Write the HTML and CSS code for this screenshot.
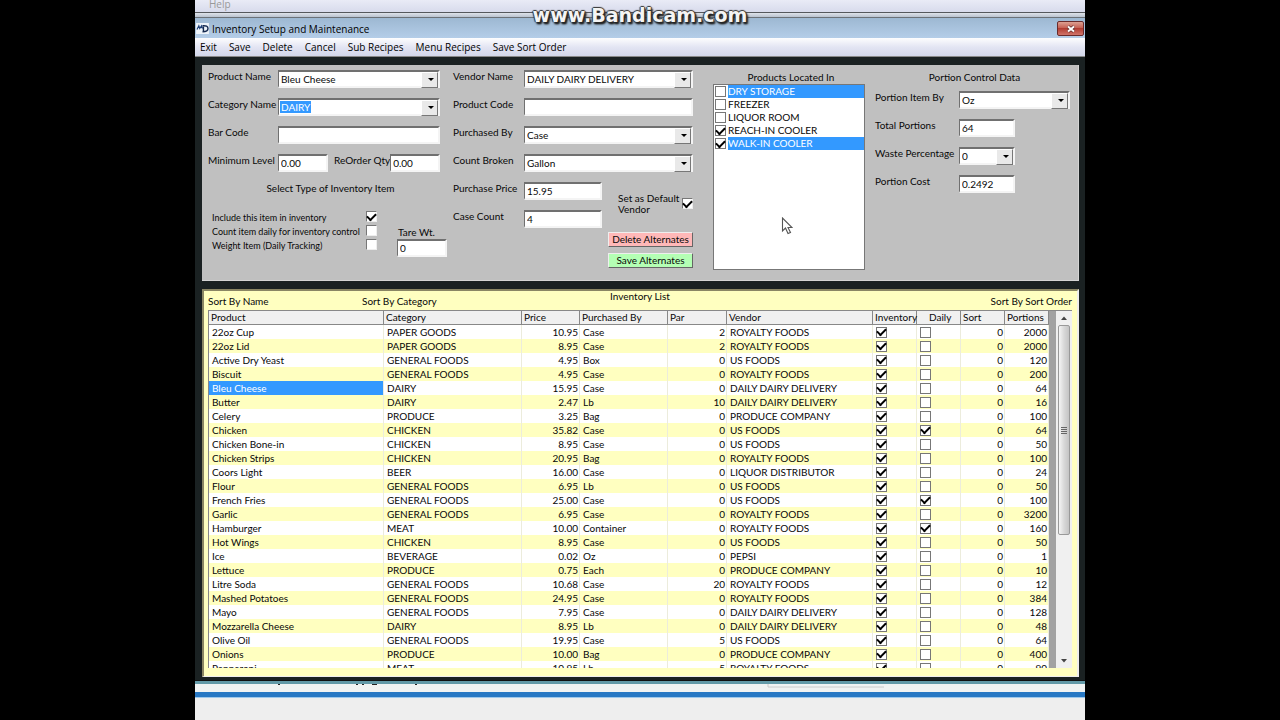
FILE: index.html
```html
<!DOCTYPE html>
<html lang="en">
<head>
<meta charset="utf-8">
<title>Inventory Setup and Maintenance</title>
<link rel="stylesheet" href="styles.css">
</head>
<body>
<div class="watermark">www.Bandicam.com</div>
<div class="desktop">
  <div class="parent-menu"><span>Help</span></div>
  <div class="parent-edge"></div>
  <main class="window">
    <header class="titlebar">
      <svg class="logo" viewBox="0 0 14 12" aria-hidden="true"><rect width="14" height="12" fill="#eef4fa"/><path d="M1 7 3 3 4 6 6 3 7 6" fill="none" stroke="#1d3f78" stroke-width="1.3"/><path d="M7 3q6-.5 6 3t-6 3.500M8 4v5" fill="none" stroke="#14284f" stroke-width="1.5"/></svg>
      <h1>Inventory Setup and Maintenance</h1>
      <button class="close" aria-label="Close"><svg viewBox="0 0 10 8"><path d="M2 1.500 8 6.500M8 1.500 2 6.500" stroke="#5c2a28" stroke-width="3.400"/><path d="M2 1.500 8 6.500M8 1.500 2 6.500" stroke="#fff" stroke-width="2"/></svg></button>
    </header>
    <nav class="menu">
      <button>Exit</button><button>Save</button><button>Delete</button><button>Cancel</button><button>Sub Recipes</button><button>Menu Recipes</button><button>Save Sort Order</button>
    </nav>
    <div class="client">
      <form class="panel setup">
        <section class="product">
          <div class="fields">
            <label for="name">Product Name</label>
            <span class="combo wide"><select id="name"><option>Bleu Cheese</option></select></span>
            <label for="category">Category Name</label>
            <span class="combo wide"><select id="category" class="selected"><option>DAIRY</option></select></span>
            <label for="barcode">Bar Code</label>
            <input class="box wide" id="barcode" type="text">
            <label for="min">Minimum Level</label>
            <input class="box" id="min" type="text" value="0.00">
            <label class="mid" for="reorder">ReOrder Qty</label>
            <input class="box" id="reorder" type="text" value="0.00">
          </div>
          <h2 class="type-title">Select Type of Inventory Item</h2>
          <div class="types">
            <div class="checks">
              <label for="inc">Include this item in inventory</label><input id="inc" type="checkbox" checked>
              <label for="count">Count item daily for inventory control</label><input id="count" type="checkbox">
              <label for="weight">Weight Item (Daily Tracking)</label><input id="weight" type="checkbox">
            </div>
            <div class="tare"><label for="tare">Tare Wt.</label><input class="box" id="tare" type="text" value="0"></div>
          </div>
        </section>
        <section class="vendor fields">
          <label for="vendor">Vendor Name</label>
          <span class="combo wide"><select id="vendor"><option>DAILY DAIRY DELIVERY</option></select></span>
          <label for="code">Product Code</label>
          <input class="box wide" id="code" type="text">
          <label for="by">Purchased By</label>
          <span class="combo wide"><select id="by"><option>Case</option></select></span>
          <label for="broken">Count Broken</label>
          <span class="combo wide"><select id="broken"><option>Gallon</option></select></span>
          <label for="price">Purchase Price</label>
          <input class="box" id="price" type="text" value="15.95">
          <label for="cases">Case Count</label>
          <input class="box" id="cases" type="text" value="4">
          <div class="alternates">
            <div class="default"><label for="def">Set as Default Vendor</label><input id="def" type="checkbox" checked></div>
            <button type="button" class="act delete">Delete Alternates</button>
            <button type="button" class="act save">Save Alternates</button>
          </div>
        </section>
        <section class="located">
          <h2>Products Located In</h2>
          <div class="list">
            <label class="on"><input type="checkbox"><span>DRY STORAGE</span></label>
            <label><input type="checkbox"><span>FREEZER</span></label>
            <label><input type="checkbox"><span>LIQUOR ROOM</span></label>
            <label><input type="checkbox" checked><span>REACH-IN COOLER</span></label>
            <label class="on"><input type="checkbox" checked><span>WALK-IN COOLER</span></label>
          </div>
          <svg class="cursor" viewBox="0 0 12 18" aria-hidden="true"><path d="M1.500 1v13l3-3 2.500 5.500 2.500-1L7 10.500h4z" fill="#fff" stroke="#555" stroke-width="1.100"/></svg>
        </section>
        <section class="portion">
          <h2>Portion Control Data</h2>
          <div class="fields">
            <label for="item">Portion Item By</label>
            <span class="combo wide"><select id="item"><option>Oz</option></select></span>
            <label for="total">Total Portions</label>
            <input class="box" id="total" type="text" value="64">
            <label for="waste">Waste Percentage</label>
            <span class="combo"><select id="waste"><option>0</option></select></span>
            <label for="cost">Portion Cost</label>
            <input class="box" id="cost" type="text" value="0.2492">
          </div>
        </section>
      </form>
      <section class="panel inventory">
        <div class="sorts">
          <button>Sort By Name</button>
          <button>Sort By Category</button>
          <h2>Inventory List</h2>
          <button>Sort By Sort Order</button>
        </div>
        <div class="grid">
          <div class="rows">
            <table>
              <colgroup><col><col class="c-cat"><col class="c-price"><col class="c-by"><col class="c-par"><col class="c-ven"><col class="c-s"><col class="c-s"><col class="c-s"><col class="c-s"></colgroup>
              <thead><tr><th>Product</th><th>Category</th><th>Price</th><th>Purchased By</th><th>Par</th><th>Vendor</th><th>Inventory</th><th class="daily">Daily</th><th>Sort</th><th>Portions</th></tr></thead>
              <tbody id="items"></tbody>
            </table>
          </div>
          <div class="gutter"></div>
          <div class="scroll">
            <svg viewBox="0 0 16 14"><path d="M5 9h6L8 5.500z" fill="#444"/></svg>
            <div class="thumb"><i></i></div>
            <svg class="down" viewBox="0 0 16 14"><path d="M5 5h6L8 8.500z" fill="#444"/></svg>
          </div>
        </div>
      </section>
    </div>
  </main>
  <footer class="below">
    <div class="status"><svg viewBox="0 0 890 8" preserveAspectRatio="xMinYMin slice"><path d="M83 0h2v1h-2zM161 0h2v1h-2zM167 0h2v1h-2zM177 0h5v1h-5zM220 0h2v1h-2z" fill="#222"/><path d="M573 0v3h116" fill="none" stroke="#ccc"/></svg></div>
    <div class="bar"></div>
  </footer>
</div>
<script src="items.js"></script>
</body>
</html>
```
FILE: styles.css
```css
* { box-sizing: border-box; }
body { margin: 0; padding: 0 195px; background: #000; color: #080808; font: 10px/14px Lato, "Liberation Sans", sans-serif; }
h1, h2 { margin: 0; font: inherit; }
button, input, select { font: inherit; color: inherit; margin: 0; }
button { padding: 0; border: 0; background: none; white-space: nowrap; }
.desktop { min-height: 100vh; display: flex; flex-direction: column; background: #eee; overflow: hidden; }
.watermark { position: absolute; top: 3px; left: 0; right: 0; text-align: center; color: #f4f4f4; font: bold 19px/24px "DejaVu Sans", sans-serif; text-shadow: 0 -1px 1px #333, 1px 0 1px #333, -1px 0 1px #333, 1px 2px 2px #222, 2px 2px 2px #222; }
.parent-menu { height: 12px; padding-left: 14px; background: linear-gradient(#e9ebf6, #d8dbec); color: #999; font: 10px/9px "Open Sans", sans-serif; }
.parent-edge { height: 6px; border-top: 1px solid #55585d; border-bottom: 1px solid #6b7178; background: linear-gradient(#dfe3ea, #b9c2cf); }
.titlebar { height: 20px; padding: 1px 1px 0 1px; display: flex; align-items: center; gap: 3px; background: linear-gradient(#9db8d2, #b4cde8); font: 10px/18px "Open Sans", sans-serif; color: #000; }
.titlebar h1 { flex: 1; }
.logo { width: 13px; height: 11px; }
.close { width: 27px; height: 15px; border: 1px solid #6a2b2b; border-radius: 2px; background: linear-gradient(#dda092, #c35a4d 50%, #b13d32 50%, #d0746a); display: grid; place-items: center; }
.close svg { width: 10px; height: 8px; }
.menu { height: 19px; padding-left: 5px; display: flex; gap: 12px; background: linear-gradient(#fdfdfe, #e3e5f3 50%, #d3d7ea); border-bottom: 1px solid #888; font: 10px/18px "Open Sans", sans-serif; color: #000; }
.client { padding: 8px 6px 3px 7px; display: flex; flex-direction: column; gap: 8px; background: #1a2122; }

.setup { height: 216px; padding: 5px 8px 0 6px; display: flex; align-items: flex-start; background: #c0c0c0; border: 1px solid #d4d4d4; border-width: 0 1px 1px 0; }
.fields { display: grid; grid-auto-rows: 18px; row-gap: 10px; }
.fields > label { grid-column: 1; line-height: 13px; white-space: nowrap; }
.box, .combo { display: block; width: 100%; min-width: 0; height: 18px; border: 1px solid; border-color: #707070 #f4f4f4 #f4f4f4 #707070; border-width: 2px 2px 2px 1px; background: #fff; border-radius: 0; }
.box { padding: 0 2px; }
.wide { grid-column: 2 / -1; }
.combo { position: relative; }
.combo select { display: block; width: 100%; height: 14px; padding: 0 2px; border: 0; border-radius: 0; appearance: none; background: #fff; line-height: 14px; }
.combo select.selected { color: #fff; background: linear-gradient(#3399ff, #3399ff) 1px 1px / 31px 12px no-repeat #fff; }
.combo::before { content: ""; position: absolute; right: 0; top: 0; width: 15px; height: 14px; background: #e9e9e9; border: 1px solid; border-color: #fff #777 #777 #fff; pointer-events: none; }
.combo::after { content: ""; position: absolute; right: 4px; top: 6px; border: 3px solid transparent; border-top-color: #000; border-bottom: 0; pointer-events: none; }
input[type="checkbox"] { appearance: none; width: 11px; height: 11px; border: 1px solid; border-color: #777 #eee #eee #777; background: #fff; display: grid; place-items: center; }
input[type="checkbox"]:checked::before { content: ""; width: 7px; height: 4px; border: solid #000; border-width: 0 0 2px 2px; transform: translateY(-1px) rotate(-45deg); }

.product { flex: none; width: 245px; }
.product .fields { grid-template-columns: 70px 50px 1fr 50px; padding-right: 13px; }
.fields > label.mid { grid-column: 3; padding-left: 6px; }
.type-title { margin: 9px 0 0; text-align: center; }
.types { display: flex; align-items: flex-end; padding: 16px 6px 0 4px; gap: 20px; }
.checks { flex: 1; display: grid; grid-template-columns: 1fr 11px; grid-auto-rows: 14px; white-space: nowrap; padding-bottom: 4px; font-size: 9px; }
.tare { flex: none; width: 50px; }
.tare label { padding-left: 1px; }
.vendor { flex: none; width: 240px; grid-template-columns: 71px 78px 1fr; }
.alternates { grid-column: 3; grid-row: 5 / span 3; padding: 11px 0 0 6px; display: flex; flex-direction: column; gap: 6px; }
.default { flex: none; height: 33px; padding-left: 10px; display: flex; justify-content: space-between; line-height: 11px; }
.default label { width: 62px; }
.default input { margin-top: 5px; flex: none; }
.act { height: 15px; flex: none; border: 1px solid; border-color: #eee #666 #666 #eee; line-height: 13px; }
.delete { background: #ffb8b8; }
.save { background: #b4ffb4; }
.located { position: relative; flex: none; width: 152px; margin-left: 20px; }
.located h2, .portion h2 { padding-left: 4px; text-align: center; line-height: 14px; }
.list { height: 186px; border: 1px solid #777; background: #fff; }
.list label { display: flex; gap: 2px; height: 13px; line-height: 13px; padding-left: 1px; align-items: center; }
.list span { flex: 1; height: 13px; }
.list input, tbody input[type="checkbox"] { border-color: #777; }
.list .on span { background: #3399ff; color: #fff; }
.cursor { position: absolute; left: 68px; top: 147px; width: 12px; height: 18px; }
.portion { flex: 1; margin-left: 10px; }
.portion .fields { padding-top: 7px; grid-template-columns: 84px 56px 1fr; }

.inventory { padding: 2px 5px 8px 4px; background: #ffffc0; border: 2px solid; border-color: #8a8664 #eee #eee #8a8664; border-width: 2px 2px 1px 2px; }
.sorts { height: 17px; display: grid; grid-template-columns: 154px 220px 116px 1fr auto; align-items: start; }
.sorts button { text-align: left; line-height: 16px; }
.sorts h2 { text-align: center; line-height: 7px; }
.sorts button:last-child { grid-column: 5; }
.grid { height: 358px; display: flex; border-top: 1px solid #888; border-left: 1px solid #888; }
.rows { flex: 1; overflow: hidden; background: #fff; }
table { width: 100%; table-layout: fixed; border-collapse: separate; border-spacing: 0; }
.c-cat { width: 138px; } .c-price { width: 58px; } .c-by { width: 88px; } .c-par { width: 59px; } .c-ven { width: 146px; } .c-s { width: 44px; }
th { height: 14px; padding: 0 0 0 2px; background: #f0f0f0; border-right: 1px solid #888; border-bottom: 1px solid #888; font-weight: normal; text-align: left; line-height: 13px; white-space: nowrap; }
th.daily { padding-left: 12px; }
td { height: 14px; padding: 0 1px 0 3px; border-right: 1px solid #ececdc; line-height: 14px; white-space: nowrap; overflow: hidden; }
tbody tr:nth-child(even) { background: #ffffc0; }
.num { text-align: right; }
.current { background: #3399ff; color: #fff; }
.gutter { width: 7px; background: #a2a2a2; }
.scroll { width: 16px; display: flex; flex-direction: column; background: #f0f0f0; }
.scroll svg { width: 16px; height: 14px; }
.down { margin-top: auto; }
.thumb { height: 210px; margin: 0 2px; border: 1px solid #999; border-radius: 2px; background: linear-gradient(90deg, #f5f5f5, #d8d8d8 50%, #c4c4c4); display: grid; place-items: center; }
.thumb i { width: 6px; height: 7px; background: repeating-linear-gradient(#666 0 1px, transparent 1px 2px); }
.below { flex: 1; border-top: 1px solid #111; }
.status { height: 11px; border-top: 3px solid #639aa8; background: #f1f3f3; overflow: hidden; }
.status svg { display: block; width: 100%; height: 8px; }
.bar { height: 6px; background: #2878c4; border-bottom: 1px solid #9fc9ec; }
```
FILE: items.js
```js
// name | category | price | purchased by | par | vendor | counted daily | portions
const items = `22oz Cup|PAPER GOODS|10.95|Case|2|ROYALTY FOODS||2000
22oz Lid|PAPER GOODS|8.95|Case|2|ROYALTY FOODS||2000
Active Dry Yeast|GENERAL FOODS|4.95|Box|0|US FOODS||120
Biscuit|GENERAL FOODS|4.95|Case|0|ROYALTY FOODS||200
Bleu Cheese|DAIRY|15.95|Case|0|DAILY DAIRY DELIVERY||64
Butter|DAIRY|2.47|Lb|10|DAILY DAIRY DELIVERY||16
Celery|PRODUCE|3.25|Bag|0|PRODUCE COMPANY||100
Chicken|CHICKEN|35.82|Case|0|US FOODS|y|64
Chicken Bone-in|CHICKEN|8.95|Case|0|US FOODS||50
Chicken Strips|CHICKEN|20.95|Bag|0|ROYALTY FOODS||100
Coors Light|BEER|16.00|Case|0|LIQUOR DISTRIBUTOR||24
Flour|GENERAL FOODS|6.95|Lb|0|US FOODS||50
French Fries|GENERAL FOODS|25.00|Case|0|US FOODS|y|100
Garlic|GENERAL FOODS|6.95|Case|0|ROYALTY FOODS||3200
Hamburger|MEAT|10.00|Container|0|ROYALTY FOODS|y|160
Hot Wings|CHICKEN|8.95|Case|0|US FOODS||50
Ice|BEVERAGE|0.02|Oz|0|PEPSI||1
Lettuce|PRODUCE|0.75|Each|0|PRODUCE COMPANY||10
Litre Soda|GENERAL FOODS|10.68|Case|20|ROYALTY FOODS||12
Mashed Potatoes|GENERAL FOODS|24.95|Case|0|ROYALTY FOODS||384
Mayo|GENERAL FOODS|7.95|Case|0|DAILY DAIRY DELIVERY||128
Mozzarella Cheese|DAIRY|8.95|Lb|0|DAILY DAIRY DELIVERY||48
Olive Oil|GENERAL FOODS|19.95|Case|5|US FOODS||64
Onions|PRODUCE|10.00|Bag|0|PRODUCE COMPANY||400
Pepperoni|MEAT|10.95|Lb|5|ROYALTY FOODS||90`;

const check = (label, on) => `<td><input type="checkbox" aria-label="${label}"${on ? " checked" : ""}></td>`;
const num = (value) => `<td class="num">${value}</td>`;

document.getElementById("items").innerHTML = items.split("\n").map((line) => {
  const [name, category, price, by, par, vendor, daily, portions] = line.split("|");
  const current = name === "Bleu Cheese" ? ' class="current"' : "";
  return `<tr><td${current}>${name}</td><td>${category}</td>${num(price)}<td>${by}</td>${num(par)}<td>${vendor}</td>` +
    check("Inventory", true) + check("Daily", daily) + num(0) + num(portions) + "</tr>";
}).join("");
```
